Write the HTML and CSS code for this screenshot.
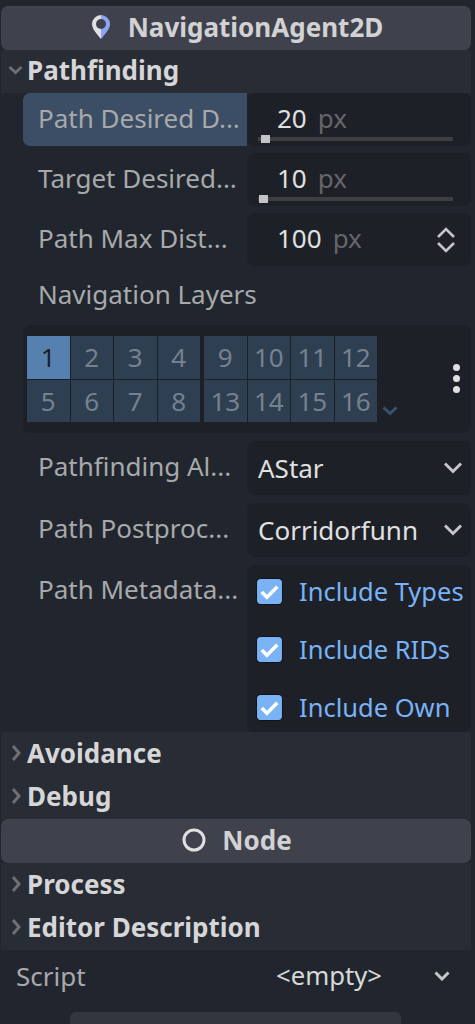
FILE: index.html
```html
<!DOCTYPE html>
<html lang="en">
<head>
<meta charset="utf-8">
<title>NavigationAgent2D Inspector</title>
<link rel="stylesheet" href="styles.css">
</head>
<body>
<main class="inspector">
  <header class="class-head">
    <svg class="head-icon" width="20" height="26" viewBox="0 0 20 26">
      <path d="M10 1a9 9 0 0 0-9 9c0 5 5 10 9 15z" fill="#e0e0e0"/>
      <path d="M10 1a9 9 0 0 1 9 9c0 5-5 10-9 15z" fill="#8da5f3"/>
      <circle cx="10" cy="10" r="5" fill="#3f424c"/>
    </svg>
    <span>NavigationAgent2D</span>
  </header>
  <div class="section">
    <svg class="caret-down" width="15" height="10" viewBox="0 0 15 10"><path d="M1.500 2l6 5.500 6-5.500" fill="none" stroke="#6f7073" stroke-width="3"/></svg>
    <span>Pathfinding</span>
  </div>
  <div class="props">
    <div class="row">
      <div class="label label-active">Path Desired D...</div>
      <div class="field">
        <div class="value"><span>20</span><span class="unit">px</span></div>
        <div class="slider"><i class="grabber grabber-a"></i></div>
      </div>
    </div>
    <div class="row">
      <div class="label">Target Desired...</div>
      <div class="field">
        <div class="value"><span>10</span><span class="unit">px</span></div>
        <div class="slider"><i class="grabber"></i></div>
      </div>
    </div>
    <div class="row">
      <div class="label">Path Max Dist...</div>
      <div class="field field-spin">
        <div class="value"><span>100</span><span class="unit">px</span></div>
        <svg width="20" height="28" viewBox="0 0 20 28"><path d="M2 11l8-8 8 8M2 17l8 8 8-8" fill="none" stroke="#c6c6c8" stroke-width="2.600"/></svg>
      </div>
    </div>
    <div class="label wide-label">Navigation Layers</div>
    <div class="layers">
      <div class="grid">
        <b class="cell cell-on">1</b><b class="cell">2</b><b class="cell">3</b><b class="cell">4</b>
        <b class="cell">5</b><b class="cell">6</b><b class="cell">7</b><b class="cell">8</b>
      </div>
      <div class="grid">
        <b class="cell">9</b><b class="cell">10</b><b class="cell">11</b><b class="cell">12</b>
        <b class="cell">13</b><b class="cell">14</b><b class="cell">15</b><b class="cell">16</b>
      </div>
      <svg class="layers-caret" width="16" height="10" viewBox="0 0 16 10"><path d="M1.500 1.500L8 7.500l6.500-6" fill="none" stroke="#3a526c" stroke-width="3"/></svg>
      <div class="kebab"><i></i><i></i><i></i></div>
    </div>
    <div class="row row-option">
      <div class="label">Pathfinding Al...</div>
      <div class="field field-option">
        <span>AStar</span>
        <svg width="20" height="14" viewBox="0 0 20 14"><path d="M2 2.500l8 8 8-8" fill="none" stroke="#c6c6c8" stroke-width="3"/></svg>
      </div>
    </div>
    <div class="row row-option">
      <div class="label">Path Postproc...</div>
      <div class="field field-option">
        <span>Corridorfunn</span>
        <svg width="20" height="14" viewBox="0 0 20 14"><path d="M2 2.500l8 8 8-8" fill="none" stroke="#c6c6c8" stroke-width="3"/></svg>
      </div>
    </div>
    <div class="row">
      <div class="label label-meta">Path Metadata...</div>
      <div class="field field-checks">
        <div class="check"><svg width="27" height="27" viewBox="0 0 26 26"><rect x="0.500" y="0.500" width="25" height="25" rx="4" fill="#79b3f5" stroke="#10131a"/><path d="M5.500 13.500l5 5 10-10" fill="none" stroke="#fff" stroke-width="3.400"/></svg><span>Include Types</span></div>
        <div class="check"><svg width="27" height="27" viewBox="0 0 26 26"><rect x="0.500" y="0.500" width="25" height="25" rx="4" fill="#79b3f5" stroke="#10131a"/><path d="M5.500 13.500l5 5 10-10" fill="none" stroke="#fff" stroke-width="3.400"/></svg><span>Include RIDs</span></div>
        <div class="check"><svg width="27" height="27" viewBox="0 0 26 26"><rect x="0.500" y="0.500" width="25" height="25" rx="4" fill="#79b3f5" stroke="#10131a"/><path d="M5.500 13.500l5 5 10-10" fill="none" stroke="#fff" stroke-width="3.400"/></svg><span>Include Own</span></div>
      </div>
    </div>
  </div>
  <div class="section section-closed">
    <svg class="caret-right" width="10" height="18" viewBox="0 0 10 18"><path d="M2 2l6 7-6 7" fill="none" stroke="#6f7073" stroke-width="3"/></svg>
    <span>Avoidance</span>
  </div>
  <div class="section section-closed">
    <svg class="caret-right" width="10" height="18" viewBox="0 0 10 18"><path d="M2 2l6 7-6 7" fill="none" stroke="#6f7073" stroke-width="3"/></svg>
    <span>Debug</span>
  </div>
  <header class="class-head class-head-node">
    <svg class="head-icon" width="24" height="24" viewBox="0 0 24 24"><circle cx="12" cy="12" r="10" fill="none" stroke="#e0e0e0" stroke-width="3"/></svg>
    <span>Node</span>
  </header>
  <div class="section section-closed">
    <svg class="caret-right" width="10" height="18" viewBox="0 0 10 18"><path d="M2 2l6 7-6 7" fill="none" stroke="#6f7073" stroke-width="3"/></svg>
    <span>Process</span>
  </div>
  <div class="section section-closed">
    <svg class="caret-right" width="10" height="18" viewBox="0 0 10 18"><path d="M2 2l6 7-6 7" fill="none" stroke="#6f7073" stroke-width="3"/></svg>
    <span>Editor Description</span>
  </div>
  <div class="script-row">
    <div class="script-label">Script</div>
    <div class="script-value">&lt;empty&gt;</div>
    <svg width="16" height="10" viewBox="0 0 16 10"><path d="M1.500 1.500L8 8l6.500-6.500" fill="none" stroke="#c6c6c8" stroke-width="3"/></svg>
  </div>
  <div class="add-button"></div>
</main>
</body>
</html>
```
FILE: styles.css
```css
* { box-sizing: border-box; }
html, body { margin: 0; height: 100%; overflow: hidden; background: #21262e; }
body { font-family: "Noto Sans", sans-serif; font-size: 26px; line-height: 36px; color: #a8a9ab; }
.inspector { padding-top: 6px; display: flex; flex-direction: column; }

.class-head {
  height: 44px; margin: 0 4px 0 1px; border-radius: 7px; background: #3f424c;
  display: flex; align-items: center; justify-content: center; gap: 17px;
  font-weight: 700; color: #d2d2d4; padding: 0 0 3px 4px;
}
.head-icon { flex: none; margin-left: -2px; }
.class-head-node { padding-left: 4px; gap: 16px; }

.section {
  height: 43px; margin: 0 4px 0 1px; background: #282c34; padding-bottom: 3px;
  display: flex; align-items: center; gap: 4px; padding-left: 7px;
  font-weight: 700; color: #d6d6d8;
}
.section-closed { padding-left: 10px; gap: 6px; height: 43.500px; padding-bottom: 2px; }

.props { padding: 0 4px 0 23px; display: flex; flex-direction: column; }
.row { display: flex; margin-bottom: 7px; }
.row:last-child { margin-bottom: 0; }
.row-option { margin-bottom: 8px; }
.label { width: 224px; flex: none; height: 53px; padding: 7px 0 0 15px; white-space: nowrap; }
.label-active { background: #3b4e66; border-radius: 7px 0 0 7px; }
.label-meta { padding-top: 6px; }
.wide-label { height: 52px; padding-top: 3px; width: auto; }

.field { flex: 1; height: 53px; background: #1d2027; border-radius: 7px; color: #e0e0e0; position: relative; min-width: 0; }
.value { display: flex; gap: 11px; padding: 7px 0 0 30px; }
.unit { color: #64666a; }
.slider { position: absolute; left: 11px; right: 18px; bottom: 5px; height: 4px; background: #3d3f42; }
.grabber { position: absolute; left: 1px; top: -2px; width: 9px; height: 8px; background: #c4c4c6; }
.grabber-a { left: 3px; }

.field-spin { display: flex; justify-content: space-between; }
.field-spin svg { margin: 13px 15px 0 0; }
.field-option { display: flex; justify-content: space-between; align-items: center; padding: 0 8px 0 11px; height: 54px; }

.layers {
  height: 108px; margin-bottom: 8px; padding: 11px 0 0 4px; border-radius: 7px; background: #1d2027;
  display: flex; position: relative; gap: 4px;
}
.grid { display: grid; grid-template-columns: repeat(4, 42.500px); grid-auto-rows: 42.500px; gap: 1px; height: 86px; }
.cell { background: #2f3f52; color: #76818f; font-weight: 400; display: flex; align-items: center; justify-content: center; }
.cell-on { background: #5580af; color: #1b2028; }
.layers-caret { margin: 70px 0 0 1px; }
.kebab { position: absolute; right: 11px; top: 39px; display: flex; flex-direction: column; gap: 4px; }
.kebab i { width: 7px; height: 7px; border-radius: 50%; background: #e0e0e2; }

.field-checks { height: 167px; color: #79b3f5; display: flex; flex-direction: column; gap: 6px; padding-left: 9px; }
.check { height: 52px; flex: none; display: flex; align-items: center; gap: 16px; white-space: nowrap; font-size: 25.500px; }

.script-row { height: 55px; padding: 0 25px 4px 16px; display: flex; align-items: center; color: #a8a9ab; }
.script-label { width: 260px; }
.script-value { flex: 1; color: #d8d8da; font-size: 25.700px; }
.add-button { height: 40px; margin: 7px 74px 0 70px; border-radius: 6px; background: #32363e; }
```
